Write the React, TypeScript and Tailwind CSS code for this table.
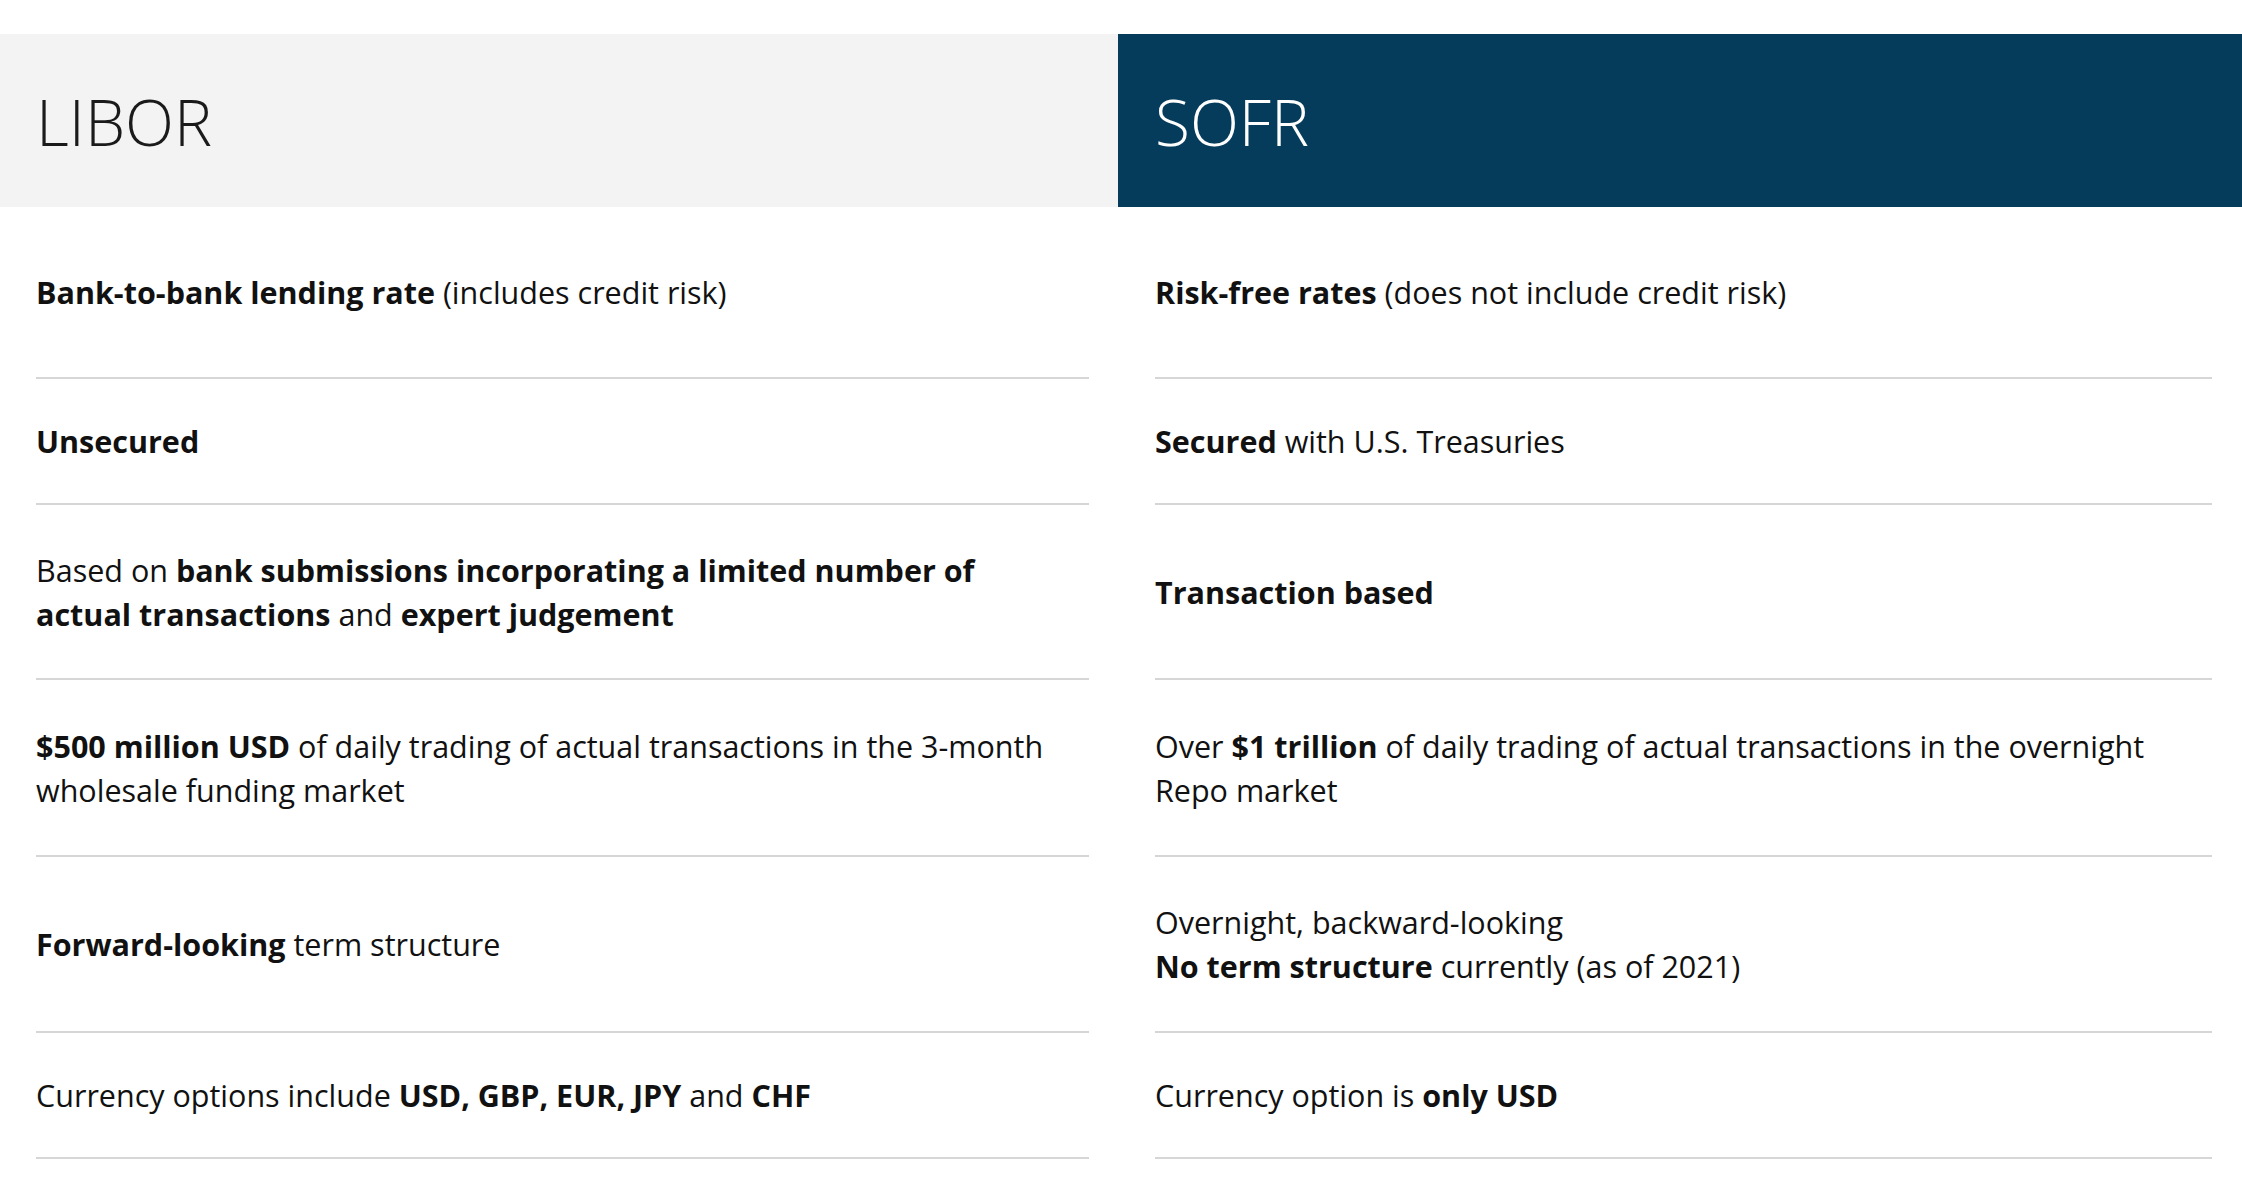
import React from 'react'

type Row = {
  height: string
  libor: React.ReactNode
  sofr: React.ReactNode
}

const rows: Row[] = [
  {
    height: 'h-[172px]',
    libor: (
      <>
        <b>Bank-to-bank lending rate</b> (includes credit risk)
      </>
    ),
    sofr: (
      <>
        <b>Risk-free rates</b> (does not include credit risk)
      </>
    ),
  },
  {
    height: 'h-[126px]',
    libor: <b>Unsecured</b>,
    sofr: (
      <>
        <b>Secured</b> with U.S. Treasuries
      </>
    ),
  },
  {
    height: 'h-[175px]',
    libor: (
      <>
        Based on <b>bank submissions incorporating a limited number of</b>
        <br />
        <b>actual transactions</b> and <b>expert judgement</b>
      </>
    ),
    sofr: <b>Transaction based</b>,
  },
  {
    height: 'h-[177px]',
    libor: (
      <>
        <b>$500 million USD</b> of daily trading of actual transactions in the 3-month
        <br />
        wholesale funding market
      </>
    ),
    sofr: (
      <>
        Over <b>$1 trillion</b> of daily trading of actual transactions in the overnight
        <br />
        Repo market
      </>
    ),
  },
  {
    height: 'h-[176px]',
    libor: (
      <>
        <b>Forward-looking</b> term structure
      </>
    ),
    sofr: (
      <>
        Overnight, backward-looking
        <br />
        <b>No term structure</b> currently (as of 2021)
      </>
    ),
  },
  {
    height: 'h-[126px]',
    libor: (
      <>
        Currency options include <b>USD, GBP, EUR, JPY</b> and <b>CHF</b>
      </>
    ),
    sofr: (
      <>
        Currency option is <b>only USD</b>
      </>
    ),
  },
]

function Cell({ height, side, children }: { height: string; side: 'left' | 'right'; children: React.ReactNode }) {
  return (
    <div
      className={`${height} flex items-center border-b-2 border-[#d6d6d6] whitespace-nowrap text-[30.5px] leading-[44px] text-[#111111] [&_b]:font-bold ${
        side === 'left' ? 'ml-[36px] mr-[29px]' : 'ml-[37px] mr-[30px]'
      }`}
    >
      <p>{children}</p>
    </div>
  )
}

export default function App() {
  return (
    <div className="min-h-screen bg-white pt-[34px] font-['Open_Sans',sans-serif]">
      <div className="grid grid-cols-[1118px_1fr]">
        <div className="flex h-[173px] items-center bg-[#f3f3f3] pl-[36px]">
          <h2 className="pt-[2px] text-[64px] font-light leading-none text-[#1a1a1a]">LIBOR</h2>
        </div>
        <div className="flex h-[173px] items-center bg-[#053c5b] pl-[37px]">
          <h2 className="pt-[2px] text-[64px] font-light leading-none text-white">SOFR</h2>
        </div>

        {rows.map((row, i) => (
          <React.Fragment key={i}>
            <Cell height={row.height} side="left">
              {row.libor}
            </Cell>
            <Cell height={row.height} side="right">
              {row.sofr}
            </Cell>
          </React.Fragment>
        ))}
      </div>
    </div>
  )
}
